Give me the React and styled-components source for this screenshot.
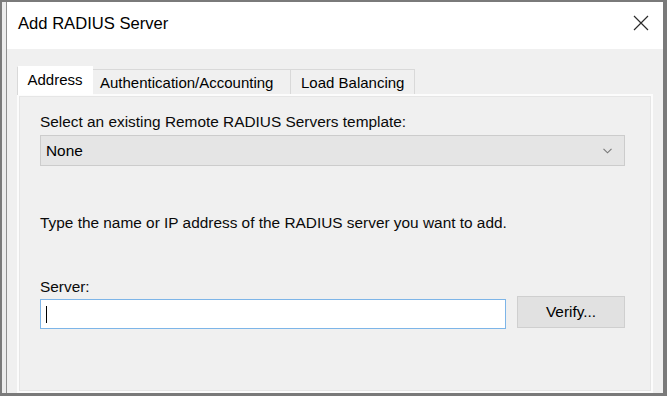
import React from 'react';
import styled, {createGlobalStyle} from 'styled-components';

const Global = createGlobalStyle`
  html, body {
    margin: 0;
    padding: 0;
    overflow: hidden;
    background: #f0f0f0;
  }
  * {
    box-sizing: border-box;
  }
`

const Frame = styled.div`
  width: 667px;
  height: 396px;
  display: flex;
  border-style: solid;
  border-color: #7a7a7a;
  border-width: 2px 4px 3px 2px;
  font-family: "Liberation Sans", Arial, sans-serif;
  color: #111;
  overflow: hidden;
`

const Backdrop = styled.div`
  width: 5px;
  background: #ececec;
  border-right: 1px solid #8f8f8f;
  flex-shrink: 0;
`

const Dialog = styled.div`
  flex: 1;
  display: flex;
  flex-direction: column;
  background: #f0f0f0;
`

const TitleBar = styled.div`
  height: 47px;
  background: #fff;
  display: flex;
  align-items: center;
  justify-content: space-between;
  padding: 0 14px 0 11px;
  flex-shrink: 0;
`

const Title = styled.div`
  font-size: 16.6px;
  color: #000;
  margin-top: -4px;
`

const Close = styled.button`
  border: none;
  background: none;
  padding: 0;
  width: 16px;
  height: 16px;
  display: flex;
  margin-top: -5px;
`

const Body = styled.div`
  flex: 1;
  padding: 17px 10px 0 10px;
  display: flex;
  flex-direction: column;
`

const TabList = styled.div`
  display: flex;
  align-items: flex-end;
  height: 28px;
  position: relative;
  z-index: 1;
`

const Tab = styled.div`
  width: ${p => p.w}px;
  height: ${p => p.active ? 29 : 25}px;
  margin-bottom: ${p => p.active ? -1 : 0}px;
  background: ${p => p.active ? '#fff' : '#f0f0f0'};
  border: 1px solid ${p => p.active ? '#fff' : '#d9d9d9'};
  border-bottom: none;
  border-left: ${p => p.active ? '1px solid #d9d9d9' : 'none'};
  font-size: 15px;
  color: #000;
  display: flex;
  justify-content: ${p => p.pl ? 'flex-start' : 'center'};
  align-items: ${p => p.active ? 'flex-start' : 'center'};
  padding-top: ${p => p.active ? 4 : 1}px;
  padding-left: ${p => p.pl || 0}px;
`

const Panel = styled.div`
  flex: 1;
  border: 2px solid #fcfcfc;
  box-shadow: inset 0 0 0 1px #e6e6e6;
  padding: 17px 26px 0 21px;
  display: flex;
  flex-direction: column;
`

const Label = styled.div`
  font-size: 15.4px;
  line-height: 18px;
  color: #0a0a0a;
  margin-top: ${p => p.mt || 0}px;
`

const Select = styled.div`
  margin-top: 4px;
  height: 31px;
  background: #e5e5e5;
  border: 1px solid #cccccc;
  display: flex;
  align-items: center;
  justify-content: space-between;
  padding: 0 12px 0 5px;
  font-size: 15.4px;
  color: #000;
`

const Row = styled.div`
  display: flex;
  align-items: flex-start;
  gap: 11px;
`

const TextBox = styled.div`
  width: 466px;
  height: 30px;
  margin-top: 3px;
  background: #fff;
  border: 1px solid #7db5e8;
  display: flex;
  align-items: center;
  padding-left: 5px;
`

const Caret = styled.span`
  width: 1px;
  height: 17px;
  background: #000;
`

const Button = styled.button`
  width: 108px;
  height: 32px;
  background: #e1e1e1;
  border: 1px solid #cfcfcf;
  font-family: "Liberation Sans", Arial, sans-serif;
  font-size: 15.4px;
  color: #000;
  padding: 0;
`

export default function App() {
    return (
        <Frame>
            <Global/>
            <Backdrop/>
            <Dialog>
                <TitleBar>
                    <Title>Add RADIUS Server</Title>
                    <Close aria-label="Close">
                        <svg width="16" height="16" viewBox="0 0 16 16">
                            <path d="M1 1 L15 15 M15 1 L1 15" stroke="#2b2b2b" strokeWidth="1.2" fill="none"/>
                        </svg>
                    </Close>
                </TitleBar>
                <Body>
                    <TabList>
                        <Tab active w={76}>Address</Tab>
                        <Tab w={198} pl={7}>Authentication/Accounting</Tab>
                        <Tab w={124} pl={10}>Load Balancing</Tab>
                    </TabList>
                    <Panel>
                        <Label>Select an existing Remote RADIUS Servers template:</Label>
                        <Select>
                            <span>None</span>
                            <svg width="9" height="6" viewBox="0 0 9 6">
                                <path d="M0.5 0.8 L4.5 4.8 L8.5 0.8" stroke="#777" strokeWidth="1.1" fill="none"/>
                            </svg>
                        </Select>
                        <Label mt={48}>Type the name or IP address of the RADIUS server you want to add.</Label>
                        <Label mt={46}>Server:</Label>
                        <Row>
                            <TextBox><Caret/></TextBox>
                            <Button>Verify...</Button>
                        </Row>
                    </Panel>
                </Body>
            </Dialog>
        </Frame>
    );
}
